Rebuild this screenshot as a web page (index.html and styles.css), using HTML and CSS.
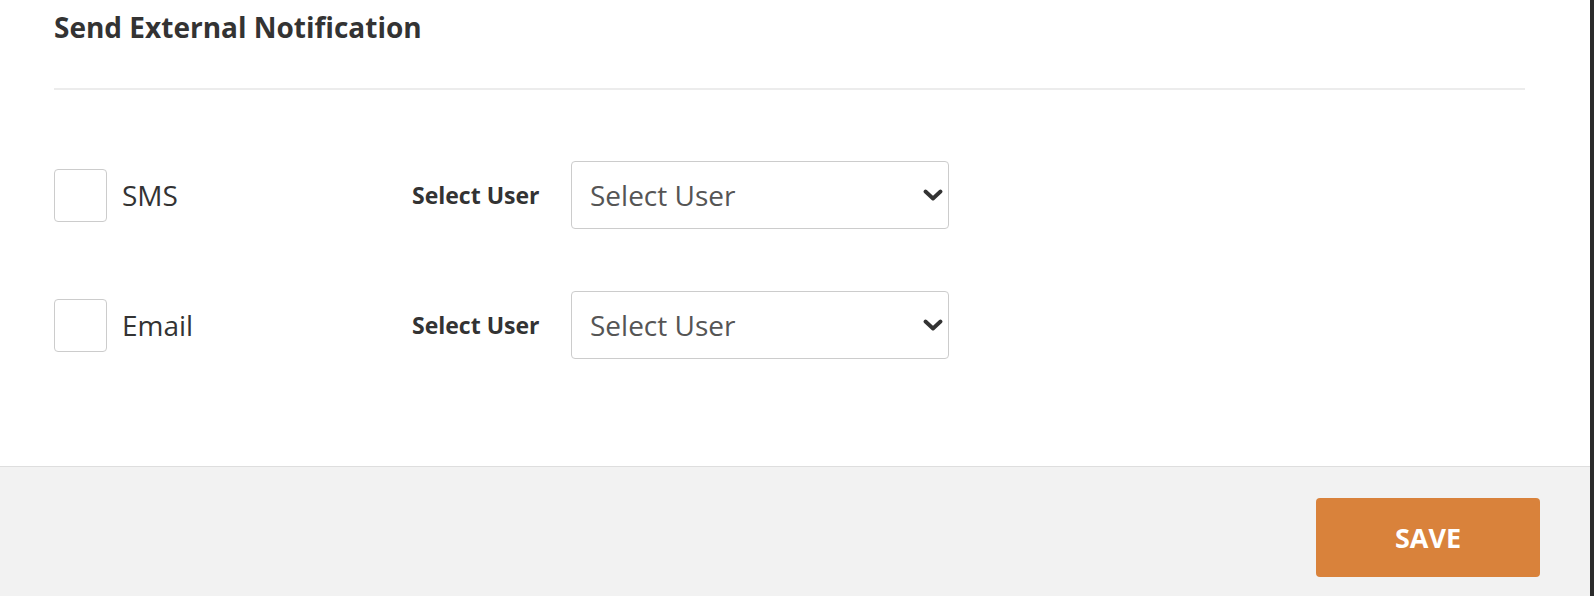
FILE: index.html
```html
<!DOCTYPE html>
<html lang="en">

<head>
    <meta charset="UTF-8">
    <meta name="viewport" content="width=device-width, initial-scale=1.0">
    <title>Send External Notification</title>

    <link rel="stylesheet" href="styles.css">
</head>

<body>
    <div class="screen">
        <div class="panel">
            <div class="panel-body">
                <h2 class="title">Send External Notification</h2>
                <div class="divider"></div>

                <div class="notify-row">
                    <label class="channel">
                        <input type="checkbox" class="check" id="sms">
                        <span class="channel-name">SMS</span>
                    </label>
                    <span class="field-label">Select User</span>
                    <div class="select-wrap">
                        <select class="user-select">
                            <option>Select User</option>
                        </select>
                        <svg class="chevron" width="20" height="12" viewBox="0 0 20 12">
                            <path d="M2.5 2.5 L10 9.5 L17.5 2.5" fill="none" stroke="#333" stroke-width="3.8" stroke-linecap="round" stroke-linejoin="round" />
                        </svg>
                    </div>
                </div>

                <div class="notify-row">
                    <label class="channel">
                        <input type="checkbox" class="check" id="email">
                        <span class="channel-name">Email</span>
                    </label>
                    <span class="field-label">Select User</span>
                    <div class="select-wrap">
                        <select class="user-select">
                            <option>Select User</option>
                        </select>
                        <svg class="chevron" width="20" height="12" viewBox="0 0 20 12">
                            <path d="M2.5 2.5 L10 9.5 L17.5 2.5" fill="none" stroke="#333" stroke-width="3.8" stroke-linecap="round" stroke-linejoin="round" />
                        </svg>
                    </div>
                </div>
            </div>

            <div class="panel-footer">
                <button class="btn-save">SAVE</button>
            </div>
        </div>
        <div class="edge"></div>
    </div>
</body>

</html>
```

FILE: styles.css
```css
html, body {
    margin: 0;
    padding: 0;
    height: 100%;
    overflow: hidden;
}
body {
    font-family: "Open Sans", "Liberation Sans", sans-serif;
    color: #333333;
    background: #f2f2f2;
}
.screen {
    display: flex;
    height: 100%;
}
.panel {
    flex: 1;
    display: flex;
    flex-direction: column;
}
.panel-body {
    background: #ffffff;
    height: 458px;
    padding: 8px 65px 0 54px;
    border-bottom: 1px solid #dedede;
}
.title {
    margin: 0;
    font-size: 28px;
    font-weight: 700;
    line-height: normal;
    color: #333333;
}
.divider {
    margin-top: 42px;
    height: 2px;
    background: #ececec;
}
.notify-row {
    display: flex;
    align-items: center;
    height: 68px;
    margin-top: 62px;
}
.divider + .notify-row {
    margin-top: 71px;
}
.channel {
    display: flex;
    align-items: center;
    width: 358px;
}
.check {
    appearance: none;
    -webkit-appearance: none;
    margin: 0;
    width: 53px;
    height: 53px;
    border: 1.5px solid #cccccc;
    border-radius: 4px;
    background: #ffffff;
    box-sizing: border-box;
}
.channel-name {
    margin-left: 15px;
    font-size: 28px;
    color: #333333;
}
.field-label {
    width: 159px;
    font-size: 23px;
    font-weight: 700;
    color: #333333;
}
.select-wrap {
    position: relative;
    width: 378px;
    height: 68px;
}
.user-select {
    appearance: none;
    -webkit-appearance: none;
    width: 100%;
    height: 100%;
    box-sizing: border-box;
    border: 1.5px solid #cccccc;
    border-radius: 4px;
    background: #ffffff;
    padding: 0 40px 0 18px;
    font-family: "Open Sans", "Liberation Sans", sans-serif;
    font-size: 28px;
    color: #555555;
}
.chevron {
    position: absolute;
    right: 6px;
    top: 28px;
    pointer-events: none;
}
.panel-footer {
    flex: 1;
    background: #f2f2f2;
    display: flex;
    justify-content: flex-end;
    align-items: flex-start;
    padding: 31px 50px 0 0;
}
.btn-save {
    width: 224px;
    height: 79px;
    border: none;
    border-radius: 4px;
    background: #d9823b;
    color: #ffffff;
    font-family: "Open Sans", "Liberation Sans", sans-serif;
    font-size: 27px;
    font-weight: 700;
}
.edge {
    width: 4px;
    background: #2b2b2b;
}
```
